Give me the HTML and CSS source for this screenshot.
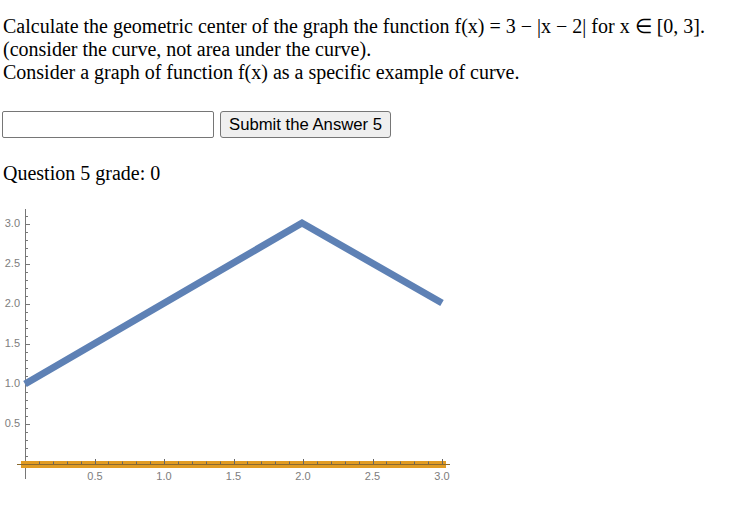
FILE: index.html
```html
<!DOCTYPE html>
<html>
<head>
<meta charset="utf-8">
<link rel="stylesheet" href="styles.css">
</head>
<body>
<div class="question">
  <p class="prompt">Calculate the geometric center of the graph the function <span class="math">f(x) = 3 − |x − 2|</span> for <span class="math">x ∈ [0, 3]</span>.<br>(consider the curve, not area under the curve).<br>Consider a graph of function f(x) as a specific example of curve.</p>
  <form class="answer">
    <input class="answer-input" type="text">
    <button class="submit" type="button">Submit the Answer 5</button>
  </form>
  <p class="grade">Question 5 grade: 0</p>
  <svg class="plot" width="470" height="285" viewBox="0 200 470 285" xmlns="http://www.w3.org/2000/svg">
    <g fill="none" stroke="#777" stroke-width="1">
      <line x1="25.5" y1="208" x2="25.5" y2="478"/>
      <line x1="17" y1="463.5" x2="450" y2="463.5"/>
    </g>
    <g id="yticks" stroke="#777" stroke-width="1"></g>
    <line x1="21" y1="463.5" x2="446" y2="463.5" stroke="#E19C24" stroke-width="7"/>
    <line x1="17" y1="463.5" x2="450" y2="463.5" stroke="#8a6a30" stroke-width="1"/>
    <g stroke="#666" stroke-width="1" id="xticks"></g>
    <polyline points="25,383 302,222 442,302" fill="none" stroke="#5E81B5" stroke-width="7" stroke-linejoin="miter"/>
    <g class="ylab" font-family="Liberation Sans, Arial, sans-serif" font-size="11" fill="#7d7d7d" text-anchor="end">
      <text x="20" y="226">3.0</text>
      <text x="20" y="266">2.5</text>
      <text x="20" y="306">2.0</text>
      <text x="20" y="346">1.5</text>
      <text x="20" y="386">1.0</text>
      <text x="20" y="426">0.5</text>
    </g>
    <g class="xlab" font-family="Liberation Sans, Arial, sans-serif" font-size="11" fill="#7d7d7d" text-anchor="middle">
      <text x="95" y="479">0.5</text>
      <text x="164" y="479">1.0</text>
      <text x="233.5" y="479">1.5</text>
      <text x="303" y="479">2.0</text>
      <text x="372.5" y="479">2.5</text>
      <text x="442" y="479">3.0</text>
    </g>
  </svg>
</div>
<script src="plot.js"></script>
</body>
</html>
```
FILE: plot.js
```js
(function () {
  var ns = "http://www.w3.org/2000/svg";
  var yg = document.getElementById("yticks");
  for (var i = 1; i <= 31; i++) {
    var y = 463 - i * 8;
    var major = i % 5 === 0;
    var l = document.createElementNS(ns, "line");
    l.setAttribute("x1", 25);
    l.setAttribute("x2", major ? 30 : 28);
    l.setAttribute("y1", y + 0.5);
    l.setAttribute("y2", y + 0.5);
    yg.appendChild(l);
  }
  var xg = document.getElementById("xticks");
  for (var j = 1; j <= 30; j++) {
    var x = Math.round(25 + j * 13.9) + 0.5;
    var maj = j % 5 === 0;
    var t = document.createElementNS(ns, "line");
    t.setAttribute("x1", x);
    t.setAttribute("x2", x);
    t.setAttribute("y1", 463);
    t.setAttribute("y2", maj ? 458 : 460.5);
    xg.appendChild(t);
  }
})();
```
FILE: styles.css
```css
html, body {
  margin: 0;
  padding: 0;
  background: #fff;
}
body {
  padding: 0 2px;
  font-family: "Liberation Serif", "Times New Roman", serif;
  font-size: 20px;
  color: #000;
}
.prompt {
  margin: 15px 0 0 1px;
  line-height: 23px;
}
.answer {
  display: flex;
  align-items: stretch;
  gap: 6px;
  margin-top: 27px;
}
.answer-input {
  width: 212px;
  height: 27px;
  box-sizing: border-box;
  border: 1px solid #767676;
  border-radius: 2px;
  margin: 0;
  padding: 1px 2px;
}
.submit {
  height: 27px;
  box-sizing: border-box;
  margin: 0;
  padding: 0 8px;
  font-family: "Liberation Sans", Arial, sans-serif;
  font-size: 16.7px;
  background: #efefef;
  border: 1px solid #767676;
  border-radius: 3px;
  color: #000;
}
.grade {
  margin: 24px 0 0 1px;
  line-height: 23px;
}
.plot {
  display: block;
  margin: 16px 0 0 -2px;
}
```
